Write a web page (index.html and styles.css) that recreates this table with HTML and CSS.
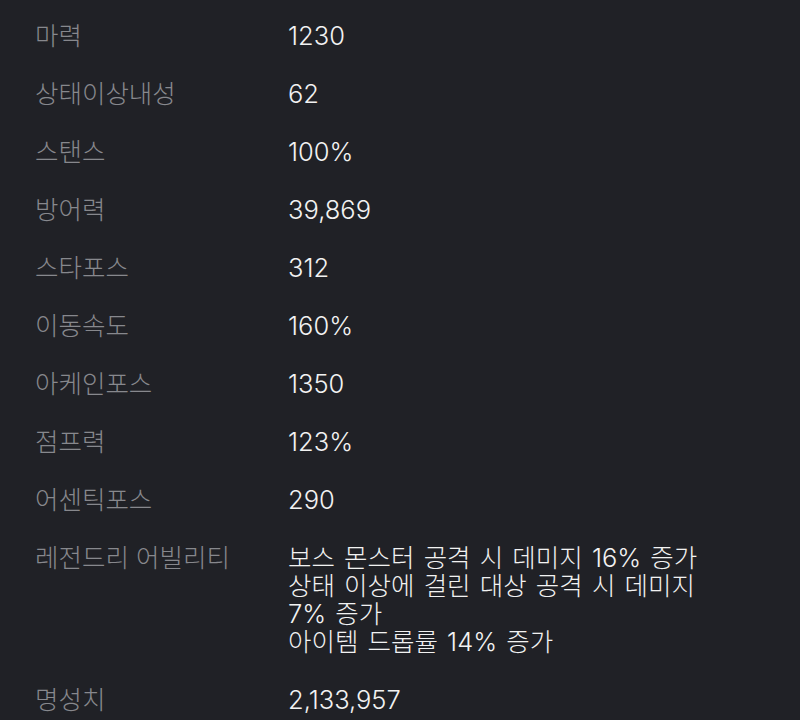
FILE: index.html
```html
<!DOCTYPE html>
<html lang="ko">
<head>
<meta charset="utf-8">
<link rel="stylesheet" href="styles.css">
</head>
<body>
<dl class="stats">
  <div class="row"><dt>마력</dt><dd>1230</dd></div>
  <div class="row"><dt>상태이상내성</dt><dd>62</dd></div>
  <div class="row"><dt>스탠스</dt><dd>100%</dd></div>
  <div class="row"><dt>방어력</dt><dd>39,869</dd></div>
  <div class="row"><dt>스타포스</dt><dd>312</dd></div>
  <div class="row"><dt>이동속도</dt><dd>160%</dd></div>
  <div class="row"><dt>아케인포스</dt><dd>1350</dd></div>
  <div class="row"><dt>점프력</dt><dd>123%</dd></div>
  <div class="row"><dt>어센틱포스</dt><dd>290</dd></div>
  <div class="row"><dt>레전드리 어빌리티</dt><dd>보스 몬스터 공격 시 데미지 16% 증가<br>상태 이상에 걸린 대상 공격 시 데미지 7% 증가<br>아이템 드롭률 14% 증가</dd></div>
  <div class="row"><dt>명성치</dt><dd>2,133,957</dd></div>
</dl>
</body>
</html>
```

FILE: styles.css
```css
html, body {
  margin: 0;
  padding: 0;
  background: #202126;
}
body {
  font-family: Inter, "Noto Sans CJK KR", sans-serif;
  font-size: 25.5px;
  font-weight: 300;
  line-height: 28px;
}
.stats {
  margin: 0;
  padding: 7px 0 0 35px;
}
.row {
  display: grid;
  grid-template-columns: 253px 425px;
  padding: 15px 0;
}
.row dt {
  color: #87888d;
}
.row dd {
  margin: 0;
  color: #f2f2f2;
  word-spacing: 2px;
}
```
